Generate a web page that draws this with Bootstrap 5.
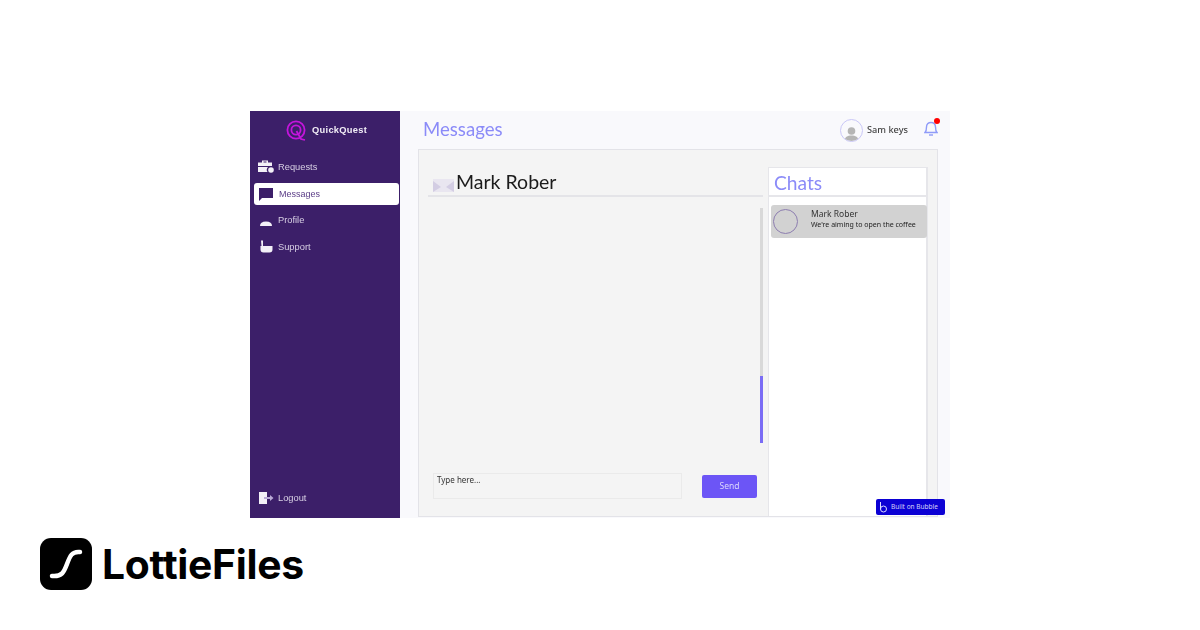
<!DOCTYPE html>
<html lang="en">
<head>
  <meta charset="UTF-8" />
  <title>QuickQuest Messages</title>
  <meta name="viewport" content="width=device-width, initial-scale=1" />
  <link href="https://cdn.jsdelivr.net/npm/bootstrap@5.3.0/dist/css/bootstrap.min.css" rel="stylesheet" />
  <style>
    body { background: #fff; height: 630px; overflow: hidden; padding-top: 111px; font-family: "Noto Sans", sans-serif; }
    .app-frame { width: 700px; height: 407px; margin-left: 250px; background: #f9f9fc; filter: blur(.35px); }
    .side-bar { width: 150px; background: #3c1f69; color: #d8d0e4; font: 9.3px "Liberation Sans", sans-serif; padding: 8px 0 0 4px; }
    .brand-row { height: 24px; padding-left: 32px; margin-bottom: 13px; gap: 6px; color: #f1edf6; font-weight: 700; font-size: 9.3px; letter-spacing: .3px; }
    .brand-row span { margin-top: -3px; }
    .side-link { height: 22px; padding-left: 3px; gap: 3px; margin-bottom: 5px; }
    .side-link svg { width: 18px; height: 18px; flex: none; }
    .side-active { background: #fff; color: #5b3d87; border-radius: 3px; width: 145px; font-size: 9px; margin-bottom: 4px; gap: 4px; }
    .side-last { margin-bottom: 9px; }
    .page-title { height: 38px; padding: 0 10px 0 23px; }
    .page-title h1 { font-family: Lato, sans-serif; font-size: 18.6px; color: #8b8bf8; margin: 0 0 1px; font-weight: 400; }
    .user-name { font-size: 9.2px; color: #444; font-weight: 500; }
    .avatar-ring { width: 23px; height: 23px; border: 1px solid #c9c7f7; border-radius: 50%; overflow: hidden; }
    .bell-wrap { width: 16px; height: 18px; margin-left: 12px; margin-top: -2px; }
    .bell-wrap svg { margin-top: 1px; }
    .bell-dot { position: absolute; right: 0; top: -2px; width: 6px; height: 6px; background: #f00; border-radius: 50%; }
    .work-panel { margin: 0 12px 1px 18px; background: #f4f4f4; border: 1px solid #e3e3e8; padding-left: 9px; padding-right: 9px; }
    .thread-col { width: 340px; }
    .thread-head { height: 30px; margin-top: 17px; margin-right: 5px; border-bottom: 2px solid #e4e4e8; padding-left: 5px; font-family: Lato, sans-serif; font-size: 19.5px; color: #1c1c1c; }
    .thread-head span { margin-left: 2px; margin-top: 2px; }
    .scroll-area { height: 235px; margin-top: 11px; }
    .scroll-track { position: absolute; right: 5px; top: 0; width: 3px; height: 100%; background: #d9d9d9; }
    .scroll-thumb { position: absolute; bottom: 0; left: 0; width: 3px; height: 67px; background: #7a6cf5; }
    .compose-row { margin-top: 30px; padding-left: 5px; }
    .type-box { width: 249px; height: 26px; border: 1px solid #eaeaea; font-size: 8px; color: #333; padding: 0 3px; line-height: 12px; }
    .send-btn { width: 55px; height: 23px; background: #6c55f6; color: #ddd8fd; font-size: 8.5px; border-radius: 2px; margin-right: 11px; margin-top: 2px; }
    .chats-col { width: 160px; background: #fff; margin-top: 17px; border: 1px solid #e6e6ea; border-bottom: 0; border-right-width: 2px; padding: 0 0 0 2px; }
    .chats-head { height: 29px; border-bottom: 2px solid #e6e6ea; font-family: Lato, sans-serif; font-size: 19.2px; color: #8b8bf8; padding-left: 5px; line-height: 30px; margin-left: -2px; }
    .chat-item { height: 33px; margin-top: 8px; background: #d2d2d2; border-radius: 3px; width: 156px; padding-left: 2px; }
    .chat-face { width: 25px; height: 25px; border: 1px solid #8d7eb0; border-radius: 50%; flex: none; }
    .chat-text { margin-top: -6px; }
    .chat-name { font-size: 8.5px; color: #333; line-height: 11px; padding-left: 1px; }
    .chat-last { font-size: 7px; color: #222; line-height: 11px; white-space: nowrap; padding-left: 1px; }
    .bubble-tag { position: absolute; left: 876px; top: 499px; width: 69px; height: 16px; background: #0b00d4; color: #d5d3f8; font-size: 6.5px; border-radius: 2px; padding-left: 3px; gap: 3px; }
    .logo-row { position: absolute; left: 40px; top: 538px; gap: 10px; }
    .logo-word { font-family: Inter, sans-serif; font-weight: 700; font-size: 40.8px; color: #000; line-height: 52px; letter-spacing: -.3px; }
  </style>
</head>
<body>
  <div class="app-frame d-flex">
    <div class="side-bar d-flex flex-column">
      <div class="brand-row d-flex align-items-center">
        <svg width="20" height="22" viewBox="0 0 20 22" fill="none" stroke="#c415dc" stroke-width="1.8"><circle cx="10" cy="10" r="8.6"/><circle cx="10" cy="10" r="4.6"/><path d="M10.500 11l4.500 8 4 1"/></svg>
        <span>QuickQuest</span>
      </div>
      <div class="side-link d-flex align-items-center">
        <svg viewBox="0 0 18 18" fill="#f3f0f7"><path d="M5 2.500h6v2h4v3.500H1V4.500h4zM6.500 3.500v1h3v-1zM1 9h10a4 4 0 0 0 -.5 5H1z"/><circle cx="14" cy="12" r="2.800"/></svg>
        <span>Requests</span>
      </div>
      <div class="side-link side-active d-flex align-items-center">
        <svg viewBox="0 0 18 18" fill="#3c1f69"><path d="M2 3h14v10H5l-3 3z"/></svg>
        <span>Messages</span>
      </div>
      <div class="side-link d-flex align-items-center">
        <svg viewBox="0 0 18 18" fill="#f3f0f7"><path d="M3 15c0-3 2-4.500 6-4.500s6 1.500 6 4.500z"/></svg>
        <span>Profile</span>
      </div>
      <div class="side-link d-flex align-items-center">
        <svg viewBox="0 0 18 18" fill="#f3f0f7"><path d="M4 2.500h2v5.500h9.500v3.500a3 3 0 0 1-3 3H6.500a3 3 0 0 1-3-3V8h1z"/></svg>
        <span>Support</span>
      </div>
      <div class="side-link side-last d-flex align-items-center mt-auto">
        <svg viewBox="0 0 18 18"><path fill="#f3f0f7" d="M2 3h8v12H2z"/><path fill="#b9a9d6" d="M7 8h6V6l3.500 3L13 12v-2H7z"/></svg>
        <span>Logout</span>
      </div>
    </div>
    <div class="flex-grow-1 d-flex flex-column">
      <div class="page-title d-flex align-items-center justify-content-between">
        <h1>Messages</h1>
        <div class="d-flex align-items-center gap-1">
          <div class="avatar-ring">
            <svg width="21" height="21" viewBox="0 0 21 21" fill="#b5b5b5"><circle cx="10.500" cy="8" r="3.800"/><path d="M3.500 18c0-4 3-5.500 7-5.500s7 1.500 7 5.500z"/></svg>
          </div>
          <span class="user-name">Sam keys</span>
          <div class="bell-wrap position-relative">
            <svg class="d-block" width="14" height="16" viewBox="0 0 14 16" fill="none" stroke="#8f9bf8" stroke-width="1.400"><path d="M1 11.500c1.500-1.500 1.500-3 1.500-5.500 0-3 2-4.500 4.500-4.500s4.500 1.500 4.500 4.500c0 2.500 0 4 1.500 5.500z"/><path d="M5 14h4"/></svg>
            <div class="bell-dot"></div>
          </div>
        </div>
      </div>
      <div class="work-panel flex-grow-1 d-flex">
        <div class="thread-col">
          <div class="thread-head d-flex align-items-center">
            <svg width="21" height="14" viewBox="0 0 21 14" class="mt-2"><path fill="#e9e6f0" d="M0 1h21v13H0z"/><path fill="#d3cde3" d="M0 3l8 6-8 5zM21 3l-8 6 8 5z"/></svg>
            <span>Mark Rober</span>
          </div>
          <div class="scroll-area position-relative">
            <div class="scroll-track"><div class="scroll-thumb"></div></div>
          </div>
          <div class="compose-row d-flex justify-content-between">
            <div class="type-box">Type here...</div>
            <div class="send-btn d-flex align-items-center justify-content-center">Send</div>
          </div>
        </div>
        <div class="chats-col">
          <div class="chats-head">Chats</div>
          <div class="chat-item d-flex align-items-center gap-2">
            <div class="chat-face"></div>
            <div class="chat-text ps-1">
              <div class="chat-name">Mark Rober</div>
              <div class="chat-last">We're aiming to open the coffee</div>
            </div>
          </div>
        </div>
      </div>
    </div>
  </div>

  <div class="bubble-tag d-flex align-items-center">
    <svg width="9" height="11" viewBox="0 0 9 11" fill="none" stroke="#dcdcff" stroke-width="1"><path d="M1.500 0v7.500"/><circle cx="4.500" cy="7" r="3"/></svg>
    <span>Built on Bubble</span>
  </div>

  <div class="logo-row d-flex align-items-center">
    <svg width="52" height="52" viewBox="0 0 52 52"><rect width="52" height="52" rx="11" fill="#000"/><path d="M12 38c10 1 12-4 15-12 3-8 5-13 13-12" fill="none" stroke="#fff" stroke-width="4.500" stroke-linecap="round"/></svg>
    <span class="logo-word">LottieFiles</span>
  </div>

  <script src="https://cdn.jsdelivr.net/npm/bootstrap@5.3.0/dist/js/bootstrap.bundle.min.js"></script>
</body>
</html>
